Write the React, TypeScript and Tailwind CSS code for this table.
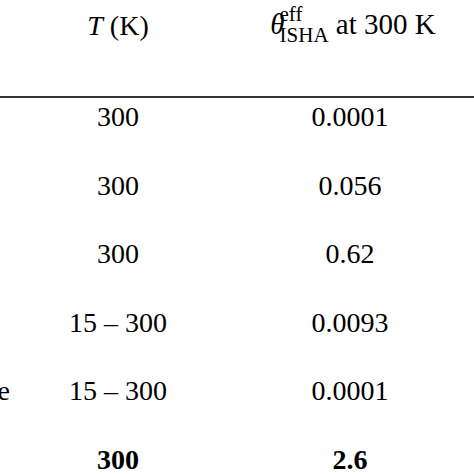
const rows: { name: string; t: string; theta: string; bold?: boolean }[] = [
  { name: "", t: "300", theta: "0.0001" },
  { name: "", t: "300", theta: "0.056" },
  { name: "", t: "300", theta: "0.62" },
  { name: "", t: "15 – 300", theta: "0.0093" },
  { name: "Surface", t: "15 – 300", theta: "0.0001" },
  { name: "", t: "300", theta: "2.6", bold: true },
];

export default function App() {
  return (
    <div
      className="w-[474px] h-[474px] overflow-hidden bg-white text-black text-[28px]"
      style={{ fontFamily: '"Liberation Serif", "Times New Roman", serif' }}
    >
      {/* header */}
      <div className="flex h-[96px]">
        <div className="w-[10px]" />
        <div className="w-[216px] pt-[7px] leading-[37px] text-center whitespace-nowrap">
          <i>T</i> (K)
        </div>
        <div className="w-[248px] pt-[4px] pl-[6px] text-[29px] leading-[37px] text-center whitespace-nowrap">
          <i>θ</i>
          <span className="inline-flex flex-col items-start ml-[-5px] text-left text-[21px] leading-[21px] align-[13px]">
            <span>eff</span>
            <span>ISHA</span>
          </span>{" "}
          at 300 K
        </div>
      </div>
      <div className="h-[2px] bg-[#333]" />

      {/* body */}
      <div className="flex flex-col">
        {rows.map((r, i) => (
          <div key={i} className={`flex h-[68.6px] leading-[37px] ${r.bold ? "font-bold" : ""}`}>
            <div className="w-[10px] flex justify-end overflow-hidden whitespace-nowrap">
              <span>{r.name}</span>
            </div>
            <div className="w-[216px] text-center whitespace-nowrap">{r.t}</div>
            <div className="w-[248px] text-center whitespace-nowrap">{r.theta}</div>
          </div>
        ))}
      </div>
    </div>
  );
}
